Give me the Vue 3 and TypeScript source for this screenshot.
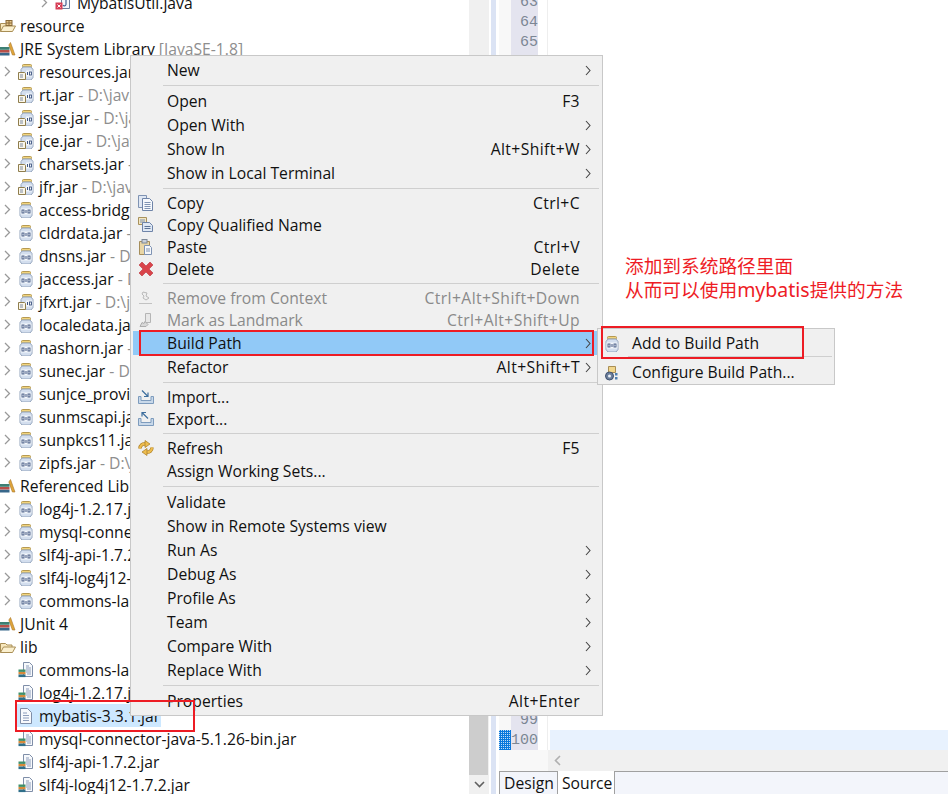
<script setup lang="ts">
type Row = { label: string; note?: string; icon: string; level: number; arrow?: boolean; selected?: boolean }
type Item = { label?: string; keys?: string; icon?: string; sub?: boolean; short?: boolean; off?: boolean; on?: boolean; sep?: boolean }

const jar = (label: string, note: string): Row => ({ label, note, icon: 'jar', level: 1, arrow: true })
const srcJar = (label: string, note: string): Row => ({ label, note, icon: 'srcjar', level: 1, arrow: true })
const file = (label: string): Row => ({ label, icon: 'libfile', level: 1 })

const rows: Row[] = [
  { label: 'MybatisUtil.java', icon: 'javaerr', level: 3, arrow: true },
  { label: 'resource', icon: 'pkgfolder', level: 0 },
  { label: 'JRE System Library', note: ' [JavaSE-1.8]', icon: 'library', level: 0 },
  srcJar('resources.jar', ' - D:\\java\\jre\\lib'),
  srcJar('rt.jar', ' - D:\\java\\jre\\lib'),
  srcJar('jsse.jar', ' - D:\\java\\jre\\lib'),
  srcJar('jce.jar', ' - D:\\java\\jre\\lib'),
  srcJar('charsets.jar', ' - D:\\java\\jre\\lib'),
  srcJar('jfr.jar', ' - D:\\java\\jre\\lib'),
  jar('access-bridge-64.jar', ' - D:\\java'),
  jar('cldrdata.jar', ' - D:\\java'),
  jar('dnsns.jar', ' - D:\\java'),
  jar('jaccess.jar', ' - D:\\java'),
  srcJar('jfxrt.jar', ' - D:\\java\\jre'),
  jar('localedata.jar', ' - D:\\java'),
  jar('nashorn.jar', ' - D:\\java'),
  jar('sunec.jar', ' - D:\\java'),
  jar('sunjce_provider.jar', ' - D:\\java'),
  jar('sunmscapi.jar', ' - D:\\java'),
  jar('sunpkcs11.jar', ' - D:\\java'),
  jar('zipfs.jar', ' - D:\\java\\jre'),
  { label: 'Referenced Libraries', icon: 'library', level: 0 },
  jar('log4j-1.2.17.jar', ' - D:\\'),
  jar('mysql-connector-java.jar', ''),
  jar('slf4j-api-1.7.2.jar', ''),
  jar('slf4j-log4j12-1.7.2.jar', ''),
  jar('commons-lang-2.6.jar', ''),
  { label: 'JUnit 4', icon: 'library', level: 0 },
  { label: 'lib', icon: 'folder', level: 0 },
  file('commons-lang-2.6.jar'),
  file('log4j-1.2.17.jar'),
  { label: 'mybatis-3.3.1.jar', icon: 'plainfile', level: 1, selected: true },
  file('mysql-connector-java-5.1.26-bin.jar'),
  file('slf4j-api-1.7.2.jar'),
  file('slf4j-log4j12-1.7.2.jar'),
]

const menu: Item[] = [
  { label: 'New', sub: true },
  { sep: true },
  { label: 'Open', keys: 'F3' },
  { label: 'Open With', sub: true },
  { label: 'Show In', keys: 'Alt+Shift+W', sub: true },
  { label: 'Show in Local Terminal', sub: true },
  { sep: true },
  { label: 'Copy', keys: 'Ctrl+C', icon: 'copy', short: true },
  { label: 'Copy Qualified Name', icon: 'copyq', short: true },
  { label: 'Paste', keys: 'Ctrl+V', icon: 'paste', short: true },
  { label: 'Delete', keys: 'Delete', icon: 'delete', short: true },
  { sep: true },
  { label: 'Remove from Context', keys: 'Ctrl+Alt+Shift+Down', icon: 'remove', short: true, off: true },
  { label: 'Mark as Landmark', keys: 'Ctrl+Alt+Shift+Up', icon: 'mark', short: true, off: true },
  { label: 'Build Path', sub: true, on: true },
  { label: 'Refactor', keys: 'Alt+Shift+T', sub: true },
  { sep: true },
  { label: 'Import...', icon: 'import', short: true },
  { label: 'Export...', icon: 'export', short: true },
  { sep: true },
  { label: 'Refresh', keys: 'F5', icon: 'refresh', short: true },
  { label: 'Assign Working Sets...' },
  { sep: true },
  { label: 'Validate' },
  { label: 'Show in Remote Systems view' },
  { label: 'Run As', sub: true },
  { label: 'Debug As', sub: true },
  { label: 'Profile As', sub: true },
  { label: 'Team', sub: true },
  { label: 'Compare With', sub: true },
  { label: 'Replace With', sub: true },
  { sep: true },
  { label: 'Properties', keys: 'Alt+Enter' },
]
</script>

<template>
  <div class="screen">
    <svg class="defs" width="0" height="0" aria-hidden="true">
      <defs>
        <symbol id="i-jar" viewBox="0 0 16 16">
          <rect x="3.5" y="0.5" width="9" height="2.5" rx="1" fill="#f2d47c" stroke="#b79a52" />
          <path d="M4 3h8l2 2.5v8l-2 2.5h-8l-2-2.5v-8z" fill="#d3deee" stroke="#93a4bc" />
          <rect x="2.5" y="6.5" width="11" height="6" fill="#f4f7fb" />
          <rect x="4" y="8" width="2" height="3" fill="none" stroke="#3e5480" stroke-width="0.9" />
          <rect x="7.5" y="8" width="1" height="3" fill="#3e5480" />
          <rect x="10" y="8" width="2" height="3" fill="none" stroke="#3e5480" stroke-width="0.9" />
        </symbol>
        <symbol id="i-srcjar" viewBox="0 0 16 16">
          <rect x="4.5" y="0.5" width="9" height="2.5" rx="1" fill="#f2d47c" stroke="#b79a52" />
          <path d="M5 3h8l2 2.5v8l-2 2.5h-8l-2-2.5v-8z" fill="#d3deee" stroke="#93a4bc" />
          <rect x="8" y="6.5" width="6.5" height="6" fill="#f4f7fb" />
          <rect x="9" y="8" width="1" height="3" fill="#3e5480" />
          <rect x="11.5" y="8" width="2" height="3" fill="none" stroke="#3e5480" stroke-width="0.9" />
          <path d="M0.5 8.5h6l1 1v6h-7z" fill="#fbf7ea" stroke="#8f7d4c" />
          <path d="M2 11h3M2 13h3" stroke="#7d8aa0" />
        </symbol>
        <symbol id="i-libfile" viewBox="0 0 16 16">
          <path d="M5.5 0.5h6l3 3v11h-9z" fill="#f7f9fc" stroke="#7f8ea8" />
          <path d="M8 4h3M8 6h5M8 8h5M8 10h5M9 12h4" stroke="#8d9dbb" />
          <rect x="0.5" y="7.5" width="7" height="2.4" fill="#3f8f6a" />
          <rect x="0.5" y="10" width="7" height="2.4" fill="#d8893a" />
          <rect x="0.5" y="12.5" width="7" height="2.6" fill="#2f6f8a" />
        </symbol>
        <symbol id="i-plainfile" viewBox="0 0 16 16">
          <path d="M2.5 0.5h7l4 4v11h-11z" fill="#f7f9fc" stroke="#7f8ea8" />
          <path d="M5 5h4M5 7.5h6M5 10h6M5 12.5h6" stroke="#8d9dbb" />
        </symbol>
        <symbol id="i-library" viewBox="0 0 16 16">
          <path d="M10.5 1.5l4.5 12.5h-2.6l-3.6-10z" fill="#e0a63a" stroke="#a9762a" stroke-width="0.6" />
          <rect x="0" y="6" width="9.5" height="2.8" fill="#3d7f73" />
          <rect x="0" y="9" width="9.5" height="2.6" fill="#b84f48" />
          <rect x="0" y="11.8" width="9.5" height="2.7" fill="#37678a" />
        </symbol>
        <symbol id="i-folder" viewBox="0 0 16 16">
          <path d="M0.5 13.5v-9h5l1.5 1.5h5v2" fill="#f7e7bd" stroke="#a98e55" />
          <path d="M0.5 13.5l3-5.5h12l-3 5.5z" fill="#fbf0cf" stroke="#a98e55" />
        </symbol>
        <symbol id="i-pkgfolder" viewBox="0 0 16 16">
          <path d="M0.5 13.5v-8h5l1 1h5v2" fill="#f7e7bd" stroke="#a98e55" />
          <path d="M0.5 13.5l3-5.5h12l-3 5.5z" fill="#fbf0cf" stroke="#a98e55" />
          <rect x="6" y="2.5" width="6" height="5" fill="#e8c98a" stroke="#8a6b3a" />
          <path d="M9 2.5v5M6 5h6" stroke="#8a6b3a" />
        </symbol>
        <symbol id="i-javaerr" viewBox="0 0 16 16">
          <path d="M6.5 0.5h6l2 2v11h-8z" fill="#f4f7fc" stroke="#6d7f9c" />
          <path d="M11 4v5.5a1.6 1.6 0 0 1-3 .5" fill="none" stroke="#44618f" stroke-width="1.2" />
          <rect x="0.5" y="7.5" width="7" height="7" fill="#d73e56" />
          <path d="M2.5 9.5l3 3M5.5 9.5l-3 3" stroke="#fff" />
        </symbol>
        <symbol id="i-copy" viewBox="0 0 16 16">
          <path d="M0.5 0.5h8v12h-8z" fill="#dfe7f3" stroke="#7f93b3" />
          <path d="M4.5 3.5h7l3 3v9h-10z" fill="#f5f8fc" stroke="#6f84a8" />
          <path d="M6.5 7.5h6M6.5 9.5h6M6.5 11.5h6M6.5 13.5h6" stroke="#7f93b3" />
        </symbol>
        <symbol id="i-copyq" viewBox="0 0 16 16">
          <path d="M0.5 0.5h8v7h-8z" fill="#f3e6c1" stroke="#a8915c" />
          <path d="M2 3h5M2 5h5" stroke="#7f93b3" />
          <path d="M4.5 5.5h7l3 3v6h-10z" fill="#dfe8f4" stroke="#6f84a8" />
          <path d="M6.5 9.5h6M6.5 11.5h6" stroke="#5c7396" />
        </symbol>
        <symbol id="i-paste" viewBox="0 0 16 16">
          <path d="M1.5 2.5h10v13h-10z" fill="#e9d6a6" stroke="#a58d5a" />
          <rect x="4" y="0.5" width="5" height="3.5" fill="#c9d0da" stroke="#7d8896" />
          <path d="M6.5 6.5h5l2 2v7h-7z" fill="#f6f8fb" stroke="#7f93b3" />
          <path d="M8 10h4M8 12h4" stroke="#7f93b3" />
        </symbol>
        <symbol id="i-delete" viewBox="0 0 16 16">
          <path d="M1 4l3-3 4 4 4-4 3 3-4 4 4 4-3 3-4-4-4 4-3-3 4-4z" fill="#d9444a" stroke="#b8333a" stroke-width="0.6" />
        </symbol>
        <symbol id="i-remove" viewBox="0 0 16 16">
          <path d="M5 2l4 1-1 3 3 2-3 2-3-2 1-2-2-2z" fill="#eee" stroke="#b9b9b9" />
          <path d="M1 13.5h13" stroke="#c2c2c2" />
        </symbol>
        <symbol id="i-mark" viewBox="0 0 16 16">
          <path d="M7.5 1.5h5v9h-5z" fill="#e8e8e8" stroke="#b5b5b5" />
          <path d="M2 14.5l2-4 2 1 1-2 3 3-2 2z" fill="#d8d8d8" stroke="#adadad" />
        </symbol>
        <symbol id="i-import" viewBox="0 0 16 16">
          <path d="M0.5 7.5v7h15v-7h-2.5v4h-10v-4z" fill="#c9d9ea" stroke="#7d9bbd" />
          <path d="M4 1.5l6 6M10 3.5v4h-4" fill="none" stroke="#3e6f9e" stroke-width="1.2" />
        </symbol>
        <symbol id="i-export" viewBox="0 0 16 16">
          <path d="M0.5 7.5v7h15v-7h-2.5v4h-10v-4z" fill="#c9d9ea" stroke="#7d9bbd" />
          <path d="M10 7.5l-6-6M4 5.5v-4h4" fill="none" stroke="#3e6f9e" stroke-width="1.2" />
        </symbol>
        <symbol id="i-refresh" viewBox="0 0 16 16">
          <path d="M2 8.5c0-3 2.5-5 5.5-4.5" fill="none" stroke="#a87a20" stroke-width="3.4" />
          <path d="M2 8.5c0-3 2.5-5 5.5-4.5" fill="none" stroke="#eebd4f" stroke-width="2.2" />
          <path d="M7 0.5l5 3.5-5 3.5z" fill="#eebd4f" stroke="#a87a20" stroke-width="0.7" />
          <path d="M14 7.5c0 3-2.5 5-5.5 4.5" fill="none" stroke="#a87a20" stroke-width="3.4" />
          <path d="M14 7.5c0 3-2.5 5-5.5 4.5" fill="none" stroke="#eebd4f" stroke-width="2.2" />
          <path d="M9 8.5l-5 3.5 5 3.5z" fill="#eebd4f" stroke="#a87a20" stroke-width="0.7" />
        </symbol>
        <symbol id="i-config" viewBox="0 0 16 16">
          <path d="M4.5 1.5h7v6h-7z" fill="#f1d68c" stroke="#a98e55" />
          <circle cx="5.5" cy="11" r="4" fill="#6c7f9c" stroke="#3f5170" />
          <circle cx="5.5" cy="11" r="1.5" fill="#eef2f7" />
          <rect x="11" y="8" width="2.5" height="2.5" fill="#4f7fb0" />
          <rect x="11" y="12" width="2.5" height="2.5" fill="#4f7fb0" />
        </symbol>
      </defs>
    </svg>

    <section class="tree">
      <div v-for="row in rows" :key="row.label" class="row" :class="['lv' + row.level, { selected: row.selected }]">
        <svg v-if="row.arrow" class="chev" width="7" height="11" viewBox="0 0 7 11">
          <path d="M1 1l4.5 4.5L1 10" fill="none" stroke="#999" stroke-width="1.3" />
        </svg>
        <svg class="ico" width="16" height="16"><use :href="'#i-' + row.icon" /></svg>
        <span class="label">{{ row.label }}<span v-if="row.note" class="note">{{ row.note }}</span></span>
      </div>
    </section>

    <div class="vscroll">
      <div class="thumb"></div>
      <svg class="down" width="11" height="7" viewBox="0 0 11 7">
        <path d="M1 1l4.5 4.5L10 1" fill="none" stroke="#606060" stroke-width="1.6" />
      </svg>
    </div>

    <div class="sash"></div>

    <section class="editor">
      <div class="edit-main">
        <div class="ruler">
          <div class="mark"></div>
        </div>
        <div class="gutter">
          <div class="nums top"><span>63</span><span>64</span><span>65</span></div>
          <div class="nums"><span>99</span><span>100</span></div>
        </div>
        <div class="code">
          <div class="current"></div>
        </div>
      </div>
      <div class="hscroll">
        <div class="hbar">
          <svg width="7" height="11" viewBox="0 0 7 11">
            <path d="M6 1L1.5 5.5 6 10" fill="none" stroke="#b0b0b0" stroke-width="1.6" />
          </svg>
        </div>
      </div>
      <div class="tabs">
        <span class="tab">Design</span>
        <span class="tab active">Source</span>
      </div>
    </section>

    <div class="menu">
      <template v-for="(item, i) in menu" :key="i">
        <div v-if="item.sep" class="sep"></div>
        <div v-else class="item" :class="{ short: item.short, off: item.off, on: item.on }">
          <span class="slot">
            <svg v-if="item.icon" width="16" height="16"><use :href="'#i-' + item.icon" /></svg>
          </span>
          <span class="text">{{ item.label }}</span>
          <span class="keys">{{ item.keys }}</span>
          <span class="tail">
            <svg v-if="item.sub" width="6" height="11" viewBox="0 0 6 11">
              <path d="M1 1l4 4.5L1 10" fill="none" stroke="#444" stroke-width="1.1" />
            </svg>
          </span>
        </div>
      </template>
    </div>

    <div class="submenu">
      <div class="sub-item">
        <span class="sub-slot"><svg width="16" height="16"><use href="#i-jar" /></svg></span>
        <span class="text">Add to Build Path</span>
      </div>
      <div class="sub-sep"></div>
      <div class="sub-item">
        <span class="sub-slot"><svg width="16" height="16"><use href="#i-config" /></svg></span>
        <span class="text">Configure Build Path...</span>
      </div>
    </div>

    <div class="note-text">添加到系统路径里面<br />从而可以使用<span class="latin">mybatis</span>提供的方法</div>

    <div class="box box-build"></div>
    <div class="box box-add"></div>
    <div class="box box-file"></div>
  </div>
</template>

<style>
html, body { margin: 0; background: #fff; }
</style>

<style scoped>
.screen {
  position: relative;
  width: 948px;
  height: 794px;
  overflow: hidden;
  display: flex;
  background: #fff;
  color: #111;
  font-family: "Open Sans", "Noto Sans", sans-serif;
  font-size: 15.7px;
}
.defs { position: absolute; }

.tree {
  width: 469px;
  flex: none;
  margin-top: -9px;
}
.row {
  position: relative;
  height: 23px;
  display: flex;
  align-items: center;
  white-space: nowrap;
}
.row .ico { flex: none; }
.lv0 .label { margin-left: 4px; }
.lv1 .ico { margin-left: 18px; }
.lv1 .label { margin-left: 5px; }
.lv3 .ico { margin-left: 55px; }
.lv3 .label { margin-left: 6px; }
.chev { position: absolute; top: 6px; left: 4px; }
.lv3 .chev { left: 41px; }
.note { color: #8e8e8e; white-space: pre; }
.selected { background: linear-gradient(#cde8ff, #cde8ff) 16px 0 / 145px 100% no-repeat; }

.vscroll {
  position: relative;
  width: 20px;
  flex: none;
  background: #f0f0f0;
}
.thumb { width: 19px; margin-top: 100px; height: 675px; background: #cdcdcd; }
.down { position: absolute; left: 5px; top: 781px; }
.sash {
  width: 5px;
  flex: none;
  margin-left: 2px;
  background: #dbe3f4;
}

.editor {
  flex: 1;
  display: flex;
  flex-direction: column;
  margin-left: 3px;
  min-width: 0;
}
.edit-main { flex: 1; display: flex; min-height: 0; }
.ruler { position: relative; width: 12px; flex: none; background: #f8f8f8; }
.mark {
  position: absolute;
  left: 0;
  bottom: 0;
  width: 12px;
  height: 20px;
  background-color: #0a78dc;
  background-image: linear-gradient(#fff, #fff);
  background-size: 1px 1px;
  background-repeat: repeat;
  background-position: 0 0;
  mask-image: none;
  background-blend-mode: normal;
}
.mark::after {
  content: "";
  display: block;
  width: 100%;
  height: 100%;
  background-color: #0a78dc;
  background-image: radial-gradient(circle at 0.5px 0.5px, rgba(255, 255, 255, 0.75) 0.6px, transparent 0.7px);
  background-size: 2px 2px;
}
.gutter {
  width: 27px;
  flex: none;
  background: #e4e4ef;
  color: #7c8794;
  font-family: "Liberation Mono", "DejaVu Sans Mono", monospace;
  font-size: 15px;
  display: flex;
  flex-direction: column;
  justify-content: space-between;
  align-items: flex-end;
  overflow: hidden;
}
.nums { display: flex; flex-direction: column; align-items: flex-end; }
.nums span { height: 20px; line-height: 22px; }
.nums.top { margin-top: -8px; }
.code {
  flex: 1;
  display: flex;
  align-items: flex-end;
  margin-left: 9px;
  padding-left: 2px;
  border-left: 1px solid #eee;
}
.current { flex: 1; height: 20px; background: #e8f2fe; }
.hscroll {
  height: 21px;
  padding-left: 49px;
  background: #f8f8f8;
  display: flex;
}
.hbar {
  flex: 1;
  background: #f0f0f0;
  display: flex;
  align-items: center;
  padding-left: 6px;
}
.tabs {
  height: 23px;
  display: flex;
  background: #f3f5fb;
  border-top: 1px solid #a0a0a0;
  box-sizing: border-box;
}
.tab {
  width: 58px;
  box-sizing: border-box;
  padding-left: 4px;
  line-height: 22px;
  border-left: 1px solid #a0a0a0;
  color: #111;
}
.tab.active {
  background: #fff;
  margin-top: -1px;
  line-height: 24px;
  border-right: 1px solid #a0a0a0;
}

.menu {
  position: absolute;
  left: 130px;
  top: 55px;
  width: 473px;
  height: 661px;
  box-sizing: border-box;
  padding: 2px 2px 0;
  background: #f0f0f0;
  border: 1px solid #c8c8c8;
}
.item {
  height: 24px;
  display: flex;
  align-items: center;
  white-space: nowrap;
}
.item.short { height: 22px; }
.item.on { background: #91c9f7; }
.item.off { color: #8a8a8a; }
.text, .keys { margin-bottom: 1px; }
.keys { letter-spacing: 0.4px; }
.slot {
  width: 34px;
  flex: none;
  display: flex;
  padding-left: 5px;
  box-sizing: border-box;
}
.text { flex: 1; }
.tail {
  width: 11px;
  flex: none;
  display: flex;
  justify-content: flex-end;
  padding-right: 9px;
}
.sep {
  height: 1px;
  margin: 3px 1px 3px 30px;
  background: #cfcfcf;
}

.submenu {
  position: absolute;
  left: 597px;
  top: 328px;
  width: 238px;
  height: 57px;
  box-sizing: border-box;
  background: #f0f0f0;
  border: 1px solid #c8c8c8;
  padding-top: 2px;
}
.sub-item {
  height: 25px;
  display: flex;
  align-items: center;
}
.sub-slot {
  width: 34px;
  flex: none;
  box-sizing: border-box;
  padding-left: 6px;
  display: flex;
}
.sub-sep {
  height: 1px;
  margin: 0 2px 3px 30px;
  background: #cfcfcf;
}

.note-text {
  position: absolute;
  left: 625px;
  top: 254px;
  color: #ee1c25;
  font-family: "Noto Sans", "Noto Sans CJK SC", sans-serif;
  font-size: 18.7px;
  line-height: 24px;
  white-space: nowrap;
}
.latin { font-size: 19.5px; }
.box {
  position: absolute;
  box-sizing: border-box;
  border: 2px solid #ed1c24;
}
.box-build { left: 139px; top: 330px; width: 455px; height: 26px; }
.box-add { left: 601px; top: 326px; width: 203px; height: 33px; }
.box-file { left: 15px; top: 700px; width: 180px; height: 32px; }
</style>
